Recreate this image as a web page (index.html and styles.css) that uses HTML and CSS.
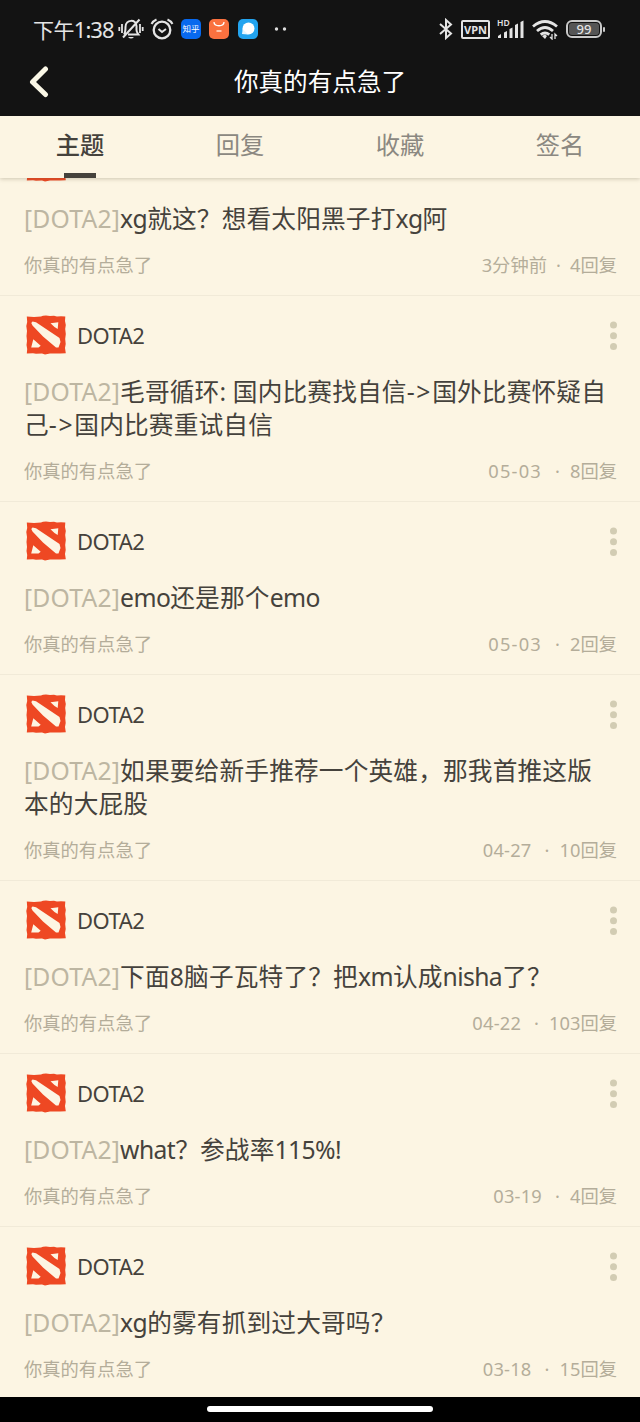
FILE: index.html
```html
<!DOCTYPE html>
<html lang="zh-CN">
<head>
<meta charset="utf-8">
<meta name="viewport" content="width=device-width">
<title>你真的有点急了</title>
<link rel="stylesheet" href="styles.css">
</head>
<body>
<svg class="defs" aria-hidden="true">
  <symbol id="dota" viewBox="0 0 40 40">
    <path fill="#ee4823" d="M.8 1.500 8 2 15 1.500 17 .8 20 .5 24 1 28 .8 31 1.500 35 1.200 39.300 1.500 39 6 39.800 10 39.200 14 39.800 19 39.200 24 39.700 29 39 33 39.800 38.300 34 38.500 28 38.500 24 38.500 19 39.400 16 38.500 10 38.700 7 38.300 .8 38.500 1.200 34 .5 30 1 26 .5 21 1 16 .3 11 1.200 7Z"/>
    <path fill="#fdf5e3" d="M5.300 8 6.500 6.500 10 7.300 33.500 23 34.500 27 32.500 32.500 30 32.500 17 21.500 6.500 10.500ZM24.500 8.300 32.300 7.300 31.700 14 28.500 12ZM7.300 24.300 14.700 30.700 12.500 32.500 5.200 32.500Z"/>
  </symbol>
  <symbol id="more" viewBox="0 0 8 30">
    <g fill="#d2ccb3"><circle cx="4.500" cy="4" r="3.500"/><circle cx="4.500" cy="14.800" r="3.500"/><circle cx="4.500" cy="25.500" r="3.500"/></g>
  </symbol>
</svg>
<div class="screen">
  <header class="top">
    <div class="status">
      <div class="status-left">
        <span class="clock">下午<span class="time">1:38</span></span>
        <svg class="bell" viewBox="0 0 26 24" fill="none" stroke="#e4e4e4" stroke-width="2">
          <path d="M6 17.500c1.500-2 1.500-4 1.500-7.500 0-8 11-8 11-1v4c0 2 1 3 2 4.500H10M21.500 2.500 5 20.500"/>
          <path d="M4 7v9M1.300 10v4M22 7v9M24.700 10v4" stroke-width="1.800"/>
          <path d="M10 20h6q-3 3-6 0Z" fill="#e4e4e4" stroke="none"/>
        </svg>
        <svg class="alarm" viewBox="0 0 24 24" fill="none" stroke="#e4e4e4" stroke-width="2.300">
          <circle cx="12" cy="13" r="8.300"/><path d="m8.500 12 3.500 3 4-3" stroke-width="2"/><path d="M1.500 7Q3 4 6.500 2.500M17.500 2.500Q21 4 22.500 7" stroke-width="2"/>
        </svg>
        <span class="app zhihu">知乎</span>
        <svg class="app bag" viewBox="0 0 20 20"><path d="M5 3c0 5 10 5 10 0" fill="none" stroke="#fff" stroke-width="1.300"/><path d="M7.500 11h5v2h-5z" fill="#ffc6ac"/></svg>
        <svg class="app bubble" viewBox="0 0 20 20"><circle cx="10.500" cy="9.500" r="6" fill="#fff"/><path d="M4.700 10 4 15l6 .5Z" fill="#e5f6ff"/></svg>
        <svg class="overflow" viewBox="0 0 14 4" fill="#ddd"><circle cx="2.500" cy="2" r="1.700"/><circle cx="10.500" cy="2" r="1.700"/></svg>
      </div>
      <div class="status-right">
        <svg class="bt" viewBox="0 0 14 22" fill="none" stroke="#e4e4e4" stroke-width="2"><path d="m1 6 11 9.500L7 20V2l5 4.500L1 16"/></svg>
        <span class="vpn">VPN</span>
        <span class="signal"><span class="hd">HD</span>
          <svg viewBox="0 0 28 20" fill="#e4e4e4"><path d="M1 19v-2l3-2v4ZM7 19v-5.500l3-1.500v7ZM12.500 19v-9l3-1.500V19ZM18 19V6l3-1.500V19ZM23.500 19V3l3-1.500V19Z"/></svg>
        </span>
        <svg class="wifi" viewBox="0 0 26 21" fill="none" stroke="#e4e4e4" stroke-width="2.800"><path d="M1 7.500q12-10 24 0M5 12q8-7 16 0M8.700 15.700q4.300-3.500 8.600 0"/><path d="m10 17 3-1.500 2 1.500-2 3Z" fill="#e4e4e4" stroke="none"/><path d="M20 15v5l-2-2M23 20v-5l2 2" stroke-width="1.300"/></svg>
        <span class="battery"><span class="level">99</span></span>
      </div>
    </div>
    <div class="nav">
      <svg class="back" viewBox="0 0 20 32" fill="none" stroke="#faf7e6" stroke-width="5" stroke-linecap="round" stroke-linejoin="round"><path d="M16.500 3 3.500 16 16.500 28.500"/></svg>
      <h1 class="title">你真的有点急了</h1>
    </div>
  </header>
  <nav class="tabs">
    <span class="tab active">主题</span><span class="tab">回复</span><span class="tab">收藏</span><span class="tab">签名</span>
  </nav>
  <main class="list">
    <article class="post">
      <div class="forum"><svg class="logo"><use href="#dota"/></svg></div>
      <p class="text"><span class="tag">[DOTA2]</span><span class="latin">xg</span>就这？想看太阳黑子打<span class="latin">xg</span>阿</p>
      <div class="meta"><span class="author">你真的有点急了</span><span class="when">3分钟前</span><span class="dot near">·</span><span>4回复</span></div>
    </article>
    <article class="post">
      <div class="forum"><svg class="logo"><use href="#dota"/></svg><span class="forum-name">DOTA2</span><svg class="more"><use href="#more"/></svg></div>
      <p class="text"><span class="tag">[DOTA2]</span>毛哥循环: 国内比赛找自信<span class="arrow">-&gt;</span>国外比赛怀疑自<br>己<span class="arrow">-&gt;</span>国内比赛重试自信</p>
      <div class="meta"><span class="author">你真的有点急了</span><span class="date wide">05-03</span><span class="dot">·</span><span>8回复</span></div>
    </article>
    <article class="post">
      <div class="forum"><svg class="logo"><use href="#dota"/></svg><span class="forum-name">DOTA2</span><svg class="more"><use href="#more"/></svg></div>
      <p class="text"><span class="tag">[DOTA2]</span><span class="latin">emo</span>还是那个<span class="latin">emo</span></p>
      <div class="meta"><span class="author">你真的有点急了</span><span class="date wide">05-03</span><span class="dot">·</span><span>2回复</span></div>
    </article>
    <article class="post">
      <div class="forum"><svg class="logo"><use href="#dota"/></svg><span class="forum-name">DOTA2</span><svg class="more"><use href="#more"/></svg></div>
      <p class="text"><span class="tag">[DOTA2]</span>如果要给新手推荐一个英雄，那我首推这版<br>本的大屁股</p>
      <div class="meta"><span class="author">你真的有点急了</span><span class="date">04-27</span><span class="dot">·</span><span>10回复</span></div>
    </article>
    <article class="post">
      <div class="forum"><svg class="logo"><use href="#dota"/></svg><span class="forum-name">DOTA2</span><svg class="more"><use href="#more"/></svg></div>
      <p class="text"><span class="tag">[DOTA2]</span>下面8脑子瓦特了？把<span class="latin">xm</span>认成<span class="latin">nisha</span>了？</p>
      <div class="meta"><span class="author">你真的有点急了</span><span class="date">04-22</span><span class="dot">·</span><span>103回复</span></div>
    </article>
    <article class="post">
      <div class="forum"><svg class="logo"><use href="#dota"/></svg><span class="forum-name">DOTA2</span><svg class="more"><use href="#more"/></svg></div>
      <p class="text"><span class="tag">[DOTA2]</span><span class="latin">what</span>？参战率<span class="latin">115%!</span></p>
      <div class="meta"><span class="author">你真的有点急了</span><span class="date">03-19</span><span class="dot">·</span><span>4回复</span></div>
    </article>
    <article class="post">
      <div class="forum"><svg class="logo"><use href="#dota"/></svg><span class="forum-name">DOTA2</span><svg class="more"><use href="#more"/></svg></div>
      <p class="text"><span class="tag">[DOTA2]</span><span class="latin">xg</span>的雾有抓到过大哥吗？</p>
      <div class="meta"><span class="author">你真的有点急了</span><span class="date">03-18</span><span class="dot">·</span><span>15回复</span></div>
    </article>
  </main>
  <footer class="home"><span class="home-bar"></span></footer>
</div>
</body>
</html>
```
FILE: styles.css
```css
* { box-sizing: border-box; }
body { margin: 0; background: #000; font-family: "Noto Sans", "Noto Sans CJK SC", sans-serif; color: #45423c; }
h1, p { margin: 0; font-weight: 400; }
svg { display: block; flex: none; }
.defs { position: absolute; width: 0; height: 0; }
.screen { width: 640px; height: 1422px; display: flex; flex-direction: column; overflow: hidden; background: #fcf5e3; }

.top { flex: none; height: 116px; background: #131313; color: #e4e4e4; position: relative; z-index: 3; }
.status { height: 58px; padding: 0 38px 0 33px; display: flex; justify-content: space-between; align-items: center; }
.status-left, .status-right { display: flex; align-items: center; }
.clock { font-size: 21px; line-height: 30px; white-space: nowrap; width: 85px; letter-spacing: -.6px; }
.time { font-size: 22px; letter-spacing: -1px; }
.bell { width: 26px; height: 24px; }
.alarm { width: 24px; height: 24px; margin-left: 6px; }
.app { width: 20px; height: 20px; border-radius: 5px; }
.zhihu { margin-left: 7px; background: #0869ee; color: #fff; font-size: 8.500px; line-height: 19px; text-align: center; }
.bag { margin-left: 8px; background: #fa713f; }
.bubble { margin-left: 9px; background: #23a4ef; }
.overflow { width: 14px; height: 4px; margin-left: 16px; }
.bt { width: 14px; height: 22px; margin-right: 8px; }
.vpn { width: 29px; height: 19px; border: 2px solid #e4e4e4; border-radius: 2px; font: 700 11px/15px "Noto Sans", sans-serif; text-align: center; }
.signal { width: 29px; height: 20px; margin-left: 7px; position: relative; }
.signal svg { width: 28px; height: 20px; }
.hd { position: absolute; left: 0; top: -1px; font: 600 8.500px/9px "Noto Sans", sans-serif; }
.wifi { width: 26px; height: 21px; margin-left: 6px; }
.battery { width: 36px; height: 18px; margin-left: 8px; border: 2px solid #c9c9c9; border-radius: 6px; padding: 1px; position: relative; }
.battery::after { content: ""; position: absolute; right: -5px; top: 5px; width: 2px; height: 5px; background: #c9c9c9; border-radius: 1px; }
.level { display: block; height: 12px; background: #555; border-radius: 3px; font: 500 13px/12px "Noto Sans", sans-serif; text-align: center; }
.nav { height: 48px; display: grid; grid-template-columns: 60px 1fr 60px; align-items: center; }
.back { width: 20px; height: 32px; margin-left: 29px; }
.title { color: #fff; font-size: 24.600px; line-height: 48px; text-align: center; }

.tabs { flex: none; height: 62px; display: grid; grid-template-columns: repeat(4, 1fr); background: #fcf5e3; position: relative; z-index: 2; box-shadow: 0 1px 4px rgba(90, 80, 50, .28); }
.tab { text-align: center; font-size: 24.300px; line-height: 57px; color: #8b8881; position: relative; }
.active { color: #45423c; font-weight: 500; }
.active::after { content: ""; position: absolute; left: 64px; bottom: 0; width: 32px; height: 5px; background: #45423c; }

.list { flex: none; height: 1274px; margin-top: -55px; overflow: hidden; }
.post { padding: 19px 23px 0 24px; height: 173px; border-bottom: 1px solid #f1ead8; }
.post:has(br) { height: 206px; }
.forum { height: 42px; display: flex; align-items: center; }
.logo { width: 40px; height: 40px; margin: 0 0 2px 2px; }
.forum-name { flex: 1; margin-left: 11px; font-size: 22px; letter-spacing: -.5px; line-height: 40px; padding-bottom: 2px; }
.more { width: 8px; height: 30px; }
.text { margin-top: 18px; font-size: 24.700px; line-height: 33px; letter-spacing: .15px; white-space: nowrap; }
.tag { color: #bdb6a2; letter-spacing: .2px; }
.latin { letter-spacing: -.6px; }
.arrow { letter-spacing: 1.700px; }
.meta { margin-top: 16px; display: flex; font-size: 18.300px; line-height: 28px; color: #b4ad9a; white-space: nowrap; }
.author { flex: 1; }
.when { margin-right: 1px; }
.date { letter-spacing: .2px; }
.wide { letter-spacing: 1.200px; }
.dot { width: 28px; padding-left: 13px; }
.near { width: 22px; padding-left: 8px; }

.home { flex: 1; background: #000; display: flex; justify-content: center; padding-top: 9px; }
.home-bar { width: 226px; height: 6px; border-radius: 3px; background: #fff; }
```
